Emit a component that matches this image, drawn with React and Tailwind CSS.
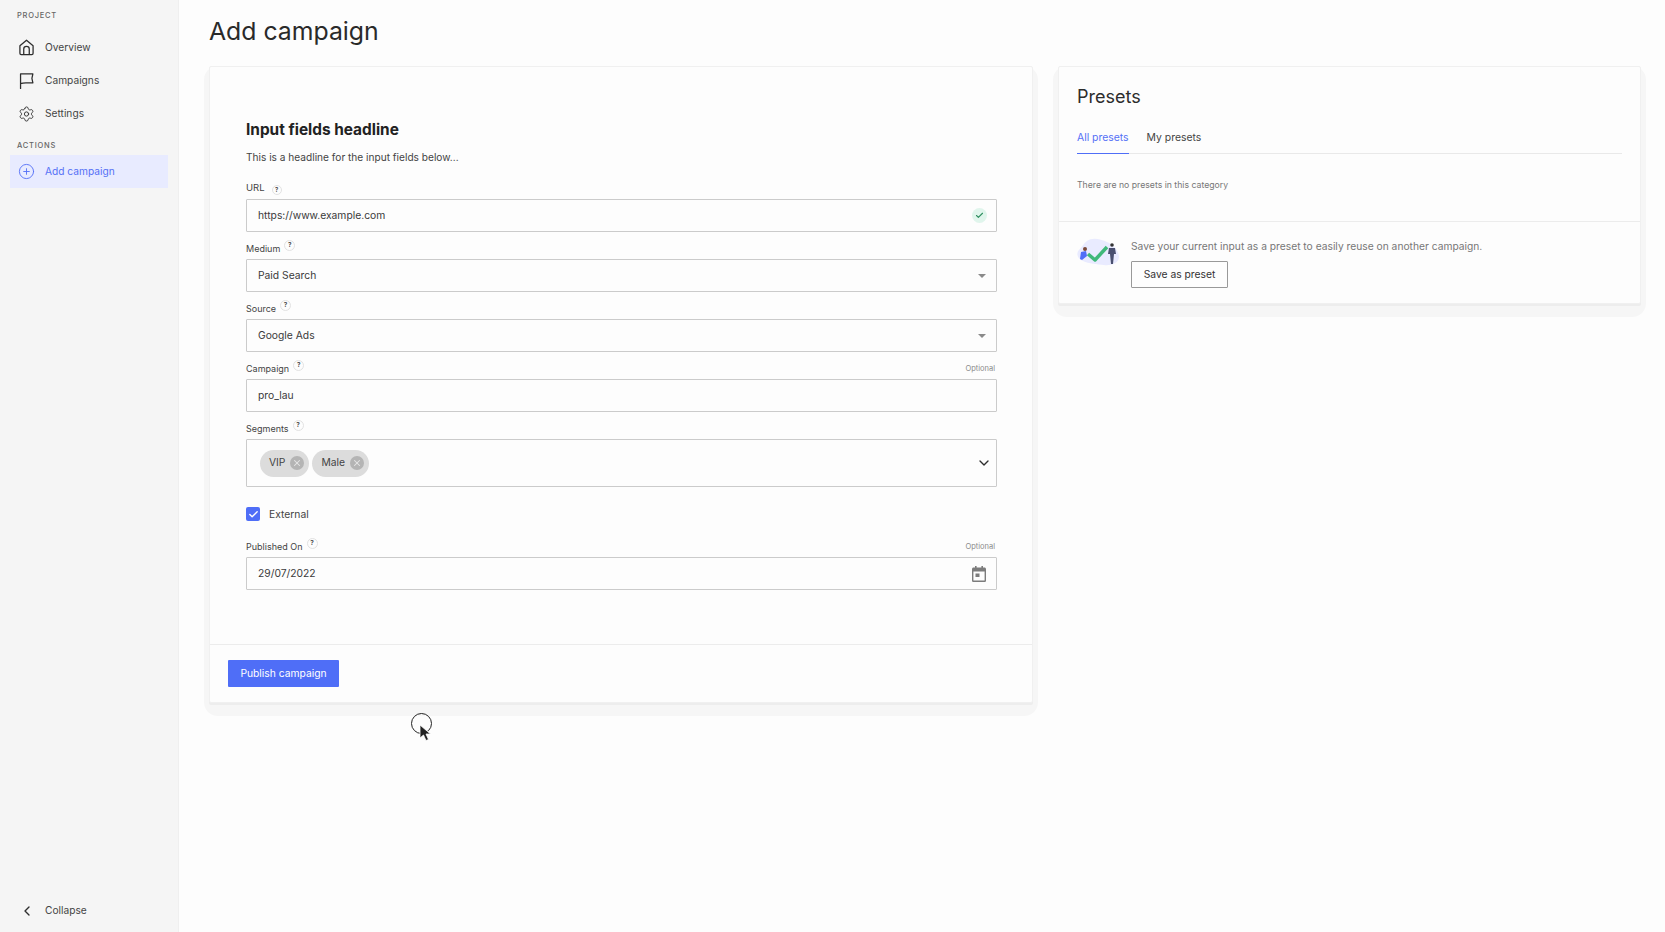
import { ChevronLeft, ChevronDown, CirclePlus, Settings, Check, X } from 'lucide-react';

const HomeIcon = () => (
  <svg width="17" height="17" viewBox="0 0 16 16" fill="none" stroke="#2e2e2e" strokeWidth="1.200" strokeLinejoin="round">
    <path d="M1.800 6.400 8 1.200l6.200 5.200v7.100c0 .8-.5 1.200-1.200 1.200H3c-.7 0-1.200-.4-1.200-1.200z" />
    <path d="M5.400 14.700V9.400C5.400 8 6.600 6.900 8 6.900s2.600 1.100 2.600 2.500v5.300" />
  </svg>
);

const FlagIcon = () => (
  <svg width="17" height="17" viewBox="0 0 16 16" fill="none" stroke="#2e2e2e" strokeWidth="1.200" strokeLinejoin="round" strokeLinecap="round">
    <path d="M2.400 15.600V1.800h11.600l-.9 4.200.9 4.200H7.500c-2 0-3.600.2-5.100.8" />
  </svg>
);

const CalendarIcon = () => (
  <svg width="14" height="16" viewBox="0 0 14 16" className="text-[#7c7c7c]" fill="currentColor">
    <path d="M3 0h1.600v1.600h4.800V0H11v1.600h1.400c.9 0 1.600.7 1.600 1.600v11.200c0 .9-.7 1.600-1.600 1.600H1.600C.7 16 0 15.300 0 14.400V3.200c0-.9.700-1.600 1.600-1.600H3zM1.400 5.600v8.600c0 .3.200.4.400.4h10.400c.2 0 .4-.1.400-.4V5.600z" />
    <rect x="3.500" y="7.500" width="4" height="3.500" />
  </svg>
);

const Caret = () => (
  <svg width="8" height="4" viewBox="0 0 8 4" fill="#8a8a8a">
    <path d="M0 0h8L4 4z" />
  </svg>
);

const Help = ({ raised }) => (
  <span className={`flex items-center justify-center rounded-full border border-[#e2e2e2] font-semibold leading-none text-[#444] ${raised ? 'ml-[4px] h-[11px] w-[11px] -translate-y-[3px] text-[6.500px]' : 'ml-[7px] h-[10px] w-[10px] translate-y-[1px] text-[6px]'}`}>?</span>
);

const Label = ({ children, raised = true, optional }) => (
  <div className="flex h-[27px] items-center justify-between pr-[2px] pt-[4px]">
    <div className={`flex items-center text-[#444] ${raised ? 'translate-y-[1px] text-[9px]' : 'translate-y-[1px] text-[9.500px]'}`}>
      {children}
      <Help raised={raised} />
    </div>
    {optional && <span className="translate-y-[1px] text-[7.500px] text-[#8a8a8a]">Optional</span>}
  </div>
);

const Field = ({ children, right }) => (
  <div className="flex h-[33px] items-center justify-between rounded-[1px] border border-[#cbcbcb] pl-[11px] pr-[9px] text-[10.300px] text-[#3a3a3a]">
    <span>{children}</span>
    {right}
  </div>
);

const Chip = ({ label }) => (
  <span className="flex h-[27px] items-center gap-[5px] rounded-full bg-[#dcdcdc] pl-[9px] pr-[5px] text-[10.300px] text-[#444]">
    {label}
    <span className="flex h-[14px] w-[14px] items-center justify-center rounded-full bg-[#b4b4b4]">
      <X size={10} strokeWidth={2.500} className="text-[#e6e6e6]" />
    </span>
  </span>
);

const NavItem = ({ icon, label, active }) => (
  <div className={`mx-[10px] flex h-[33px] items-center gap-[10px] pl-[8px] text-[10.200px] ${active ? 'bg-[#e8ebff] text-[#5570f6]' : 'text-[#444]'}`}>
    <span className="flex w-[17px] justify-center">{icon}</span>
    {label}
  </div>
);

const Heading = ({ children }) => (
  <div className="pl-[17px] text-[7.500px] font-medium leading-[10px] tracking-[0.1em] text-[#666]">{children}</div>
);

function Sidebar() {
  return (
    <aside className="flex h-[932px] w-[179px] shrink-0 flex-col justify-between border-r border-[#efefef] bg-[#f5f5f5]">
      <div>
        <div className="pt-[11px] pb-[10px]"><Heading>PROJECT</Heading></div>
        <NavItem icon={<HomeIcon />} label="Overview" />
        <NavItem icon={<FlagIcon />} label="Campaigns" />
        <NavItem icon={<Settings size={18} strokeWidth={1.300} className="text-[#2e2e2e]" />} label="Settings" />
        <div className="pt-[11px] pb-[4px]"><Heading>ACTIONS</Heading></div>
        <NavItem icon={<CirclePlus size={17} strokeWidth={1.300} />} label="Add campaign" active />
      </div>
      <div className="pb-[5px]">
        <NavItem icon={<ChevronLeft size={16} strokeWidth={2} className="text-[#2e2e2e]" />} label="Collapse" />
      </div>
    </aside>
  );
}

function CampaignForm() {
  return (
    <div className="w-[834px] shrink-0 rounded-[14px] bg-[#f6f6f6] px-[5px] pb-[13px]">
      <div className="h-[637px] rounded-[2px] border border-[#f0f0f0] bg-[#fdfdfd] shadow-[0_2px_0_#ededed]">
        <div className="h-[577px] pl-[36px] pr-[35px] pt-[53px]">
          <h2 className="text-[15.400px] font-bold leading-[20px] text-[#222]">Input fields headline</h2>
          <p className="mt-[8px] text-[10.150px] leading-[18px] text-[#444]">This is a headline for the input fields below...</p>
          <div className="mt-[6px]">
            <Label raised={false}>URL</Label>
            <Field right={
              <span className="flex h-[15px] w-[15px] items-center justify-center rounded-full bg-[#e0f5ec]">
                <Check size={9} strokeWidth={3} className="text-[#2f8f60]" />
              </span>
            }>https://www.example.com</Field>
            <Label>Medium</Label>
            <Field right={<span className="pr-[1px]"><Caret /></span>}>Paid Search</Field>
            <Label>Source</Label>
            <Field right={<span className="pr-[1px]"><Caret /></span>}>Google Ads</Field>
            <Label optional>Campaign</Label>
            <Field>pro_lau</Field>
            <Label>Segments</Label>
            <div className="flex h-[48px] items-center justify-between rounded-[1px] border border-[#cbcbcb] pl-[13px] pr-[4px]">
              <div className="flex gap-[3px]">
                <Chip label="VIP" />
                <Chip label="Male" />
              </div>
              <ChevronDown size={16} strokeWidth={2} className="text-[#2e2e2e]" />
            </div>
            <div className="mt-[20px] flex h-[14px] items-center gap-[9px]">
              <span className="flex h-[14px] w-[14px] items-center justify-center rounded-[2px] bg-[#4f6ef7]">
                <Check size={11} strokeWidth={3} className="text-white" />
              </span>
              <span className="translate-y-[1px] text-[10.300px] text-[#444]">External</span>
            </div>
            <div className="mt-[9px]"><Label optional>Published On</Label></div>
            <Field right={<span className="pr-[1px]"><CalendarIcon /></span>}>29/07/2022</Field>
          </div>
        </div>
        <div className="border-t border-[#ececec] px-[18px] pt-[14px]">
          <button className="h-[27px] w-[111px] rounded-[1px] bg-[#4f6ef7] text-[10.300px] text-white">Publish campaign</button>
        </div>
      </div>
    </div>
  );
}

function PresetsPanel() {
  return (
    <div className="w-[593px] shrink-0 rounded-[14px] bg-[#f6f6f6] px-[5px] pb-[13px]">
      <div className="h-[238px] rounded-[2px] border border-[#f0f0f0] bg-[#fdfdfd] shadow-[0_2px_0_#ededed]">
        <div className="h-[154px] px-[18px] pt-[18px]">
          <h3 className="text-[18px] leading-[24px] text-[#2c2c2c]">Presets</h3>
          <div className="mt-[15px] flex h-[30px] gap-[18px] border-b border-[#e9e9e9] text-[10.400px]">
            <span className="-mb-px border-b-[1.500px] border-[#4f6ef7] pt-[6px] text-[#5570f6]">All presets</span>
            <span className="pt-[6px] text-[#444]">My presets</span>
          </div>
          <p className="mt-[25px] text-[8.700px] text-[#777]">There are no presets in this category</p>
        </div>
        <div className="flex gap-[12px] border-t border-[#ececec] px-[18px] pt-[17px]">
          <svg width="42" height="28" viewBox="0 0 42 28" className="shrink-0 -translate-y-px">
            <path d="M10 3c5-4 14-2 20 1 6 2 12 9 12 15 0 6-8 9-15 8C20 26 12 26 6 23 0 21-1 15 2 12c3-3 5-7 8-9z" fill="#e9ebff" />
            <path d="M11 16l7 6L30 9" fill="none" stroke="#3fb87a" strokeWidth="3.500" strokeLinejoin="round" />
            <circle cx="8" cy="11" r="2" fill="#7a4a3a" />
            <path d="M4 14l5-1 1 5-5 4-2-1z" fill="#4f6ef7" />
            <circle cx="35" cy="7" r="1.800" fill="#333" />
            <path d="M32 10h6l1 6h-2l-1 10h-2l-1-10h-2z" fill="#4a5070" />
          </svg>
          <div>
            <p className="text-[10.250px] leading-[14px] text-[#777]">Save your current input as a preset to easily reuse on another campaign.</p>
            <button className="mt-[8px] h-[27px] w-[97px] rounded-[1px] border border-[#999] text-[10.300px] text-[#333]">Save as preset</button>
          </div>
        </div>
      </div>
    </div>
  );
}

export default function App() {
  return (
    <div className="relative flex h-[932px] overflow-hidden bg-[#fdfdfd] font-['Inter',sans-serif]">
      <Sidebar />
      <main className="pl-[25px]">
        <h1 className="h-[66px] pl-[5px] pt-[14px] text-[24.800px] leading-[34px] text-[#2a2a2a]">Add campaign</h1>
        <div className="flex items-start gap-[15px]">
          <CampaignForm />
          <PresetsPanel />
        </div>
      </main>
      {/* recording cursor */}
      <div className="absolute left-[411px] top-[713px] h-[21px] w-[21px] rounded-full border border-[#222]" />
      <svg width="14" height="18" viewBox="0 0 14 18" className="absolute left-[419px] top-[724px]">
        <path d="M1 1v13l3.500-3 2.500 5.500 2.500-1-2.500-5.500h4.500z" fill="#222" stroke="#fff" strokeWidth="0.800" />
      </svg>
    </div>
  );
}
